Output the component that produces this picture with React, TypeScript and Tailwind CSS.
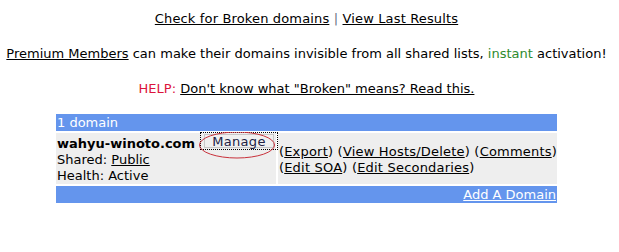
import React from "react";

const font = { fontFamily: '"DejaVu Sans", Verdana, sans-serif' };

function Paren({ label }: { label: string }) {
  return (
    <span>
      (<a className="underline text-black">{label}</a>)
    </span>
  );
}

export default function App() {
  return (
    <div className="w-[619px] h-[252px] bg-white text-[13px] leading-[16px] text-black" style={font}>
      <div className="w-[613px] flex flex-col items-center pt-[11px]">
        <p className="tracking-[0.15px]">
          <a className="underline">Check for Broken domains</a> <span className="text-gray-500">|</span>{" "}
          <a className="underline">View Last Results</a>
        </p>
        <p className="mt-[19px]">
          <a className="underline">Premium Members</a> can make their domains invisible from all shared lists,{" "}
          <span className="text-[#2e8b2e]">instant</span> activation!
        </p>
        <p className="mt-[19px]">
          <span className="text-[#dc143c]">HELP:</span> <a className="underline">Don't know what "Broken" means? Read this.</a>
        </p>
      </div>

      {/* domain table */}
      <div className="ml-[56px] mt-[17px] w-[501px] flex flex-col gap-[2px]">
        <div className="h-[17px] bg-[#6495ed] text-white pl-[1px] leading-[17px]">1 domain</div>
        <div className="flex gap-[2px] h-[51px]">
          <div className="w-[221px] bg-[#eeeeee] pl-[1px] pt-[3px] relative">
            <div className="flex items-center h-[16px]">
              <span className="font-bold">wahyu-winoto.com</span>
            </div>
            <div>
              Shared: <a className="underline">Public</a>
            </div>
            <div>Health: Active</div>
            {/* manage button with focus outline */}
            <div className="absolute left-[145px] top-0 w-[76px] h-[16px] outline-1 outline-dotted outline-black flex items-center justify-center">
              <span className="h-[14px] w-[70px] border border-[#c8c8c8] bg-[#f0f0f0] text-[#222244] leading-[13px] text-center tracking-[0.3px]">
                Manage
              </span>
            </div>
            <svg className="absolute left-[143px] top-[-1px] pointer-events-none" width="80" height="30" viewBox="0 0 80 30">
              <ellipse cx="38" cy="13" rx="37.5" ry="13" fill="none" stroke="#c8303a" strokeWidth="1" />
            </svg>
          </div>
          <div className="flex-1 bg-[#eeeeee] flex flex-col justify-center pl-[1px] pt-[3px] tracking-[0.2px] whitespace-nowrap">
            <div>
              <Paren label="Export" /> <Paren label="View Hosts/Delete" /> <Paren label="Comments" />
            </div>
            <div>
              <Paren label="Edit SOA" /> <Paren label="Edit Secondaries" />
            </div>
          </div>
        </div>
        <div className="h-[17px] bg-[#6495ed] text-white text-right leading-[17px] pr-[1px]">
          <a className="underline">Add A Domain</a>
        </div>
      </div>
    </div>
  );
}
